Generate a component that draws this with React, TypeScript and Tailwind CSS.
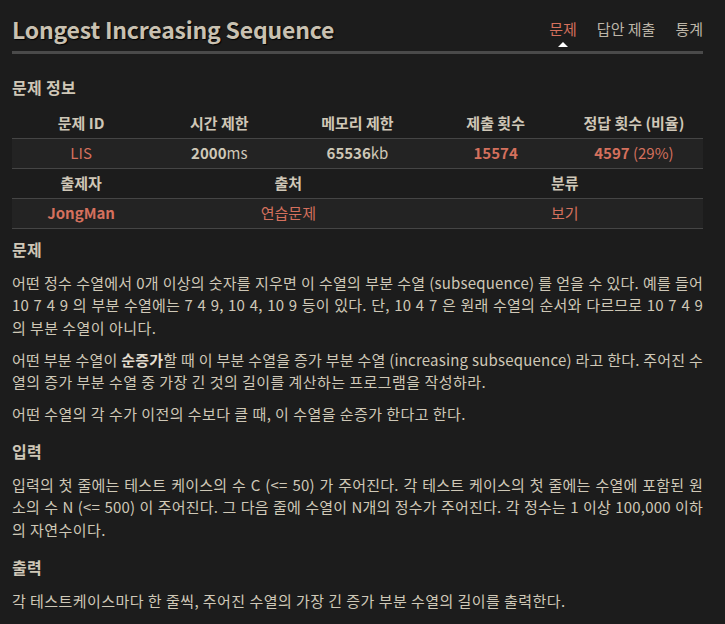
import React from "react";

const red = "text-[#d4705d]";

// 한 줄씩 끊어서 원본과 같은 줄바꿈을 유지
const Line = ({ full, children }: { full?: boolean; children: React.ReactNode }) => (
  <div className={"whitespace-nowrap " + (full ? "[text-align-last:justify]" : "tracking-[0.45px]")}>{children}</div>
);

const Section = ({ title, className, children }: { title: string; className?: string; children: React.ReactNode }) => (
  <section className={className}>
    <h2 className="text-[16px] leading-[22px] font-bold tracking-[0.3px] text-[#cfc7b7]">{title}</h2>
    <div className="mt-3 space-y-[9.5px] text-[15px] leading-[22.5px] tracking-[0.2px]">{children}</div>
  </section>
);

const App: React.FC = () => {
  return (
    <div className="min-h-screen bg-[#1c1c1c] text-[#cfc8b7] font-['Noto_Sans_CJK_KR','Noto_Sans',sans-serif]">
      <div className="ml-3 w-[691px]">
        {/* Header */}
        <header className="flex justify-between items-start pt-[14px] h-[51px]">
          <h1 className="text-[23px] leading-[30px] font-bold tracking-[-0.2px] text-[#c9c1b1] [text-shadow:1px_1px_1px_#000]">
            Longest Increasing Sequence
          </h1>
          <nav className="flex gap-[20px] text-[15px] leading-[30px]">
            <span className={"relative -ml-1 " + red}>
              문제
              <span className="absolute left-1/2 -translate-x-1/2 top-[28px] w-0 h-0 border-l-[5px] border-r-[5px] border-b-[5px] border-l-transparent border-r-transparent border-b-white" />
            </span>
            <span className="text-[#bdb6a8]">답안 제출</span>
            <span className="text-[#bdb6a8]">통계</span>
          </nav>
        </header>
        <div className="h-[3px] bg-[#4a4a4a]" />

        {/* 문제 정보 */}
        <h2 className="mt-[22px] text-[16px] leading-[22px] font-bold tracking-[0.3px] text-[#cfc7b7]">문제 정보</h2>
        <table className="mt-[10px] w-full table-fixed border-collapse text-[15px] text-center">
          <tbody>
            <tr className="h-[30px] font-bold text-[#cfc7b7]">
              <td>문제 ID</td>
              <td>시간 제한</td>
              <td>메모리 제한</td>
              <td>제출 횟수</td>
              <td>정답 횟수 (비율)</td>
            </tr>
            <tr className="h-[30px] bg-[#232323] border-t border-b border-[#454545]">
              <td className={red}>LIS</td>
              <td><b>2000</b>ms</td>
              <td><b>65536</b>kb</td>
              <td className={"font-bold " + red}>15574</td>
              <td className={red}><b>4597</b> (29%)</td>
            </tr>
            <tr className="h-[30px] font-bold text-[#cfc7b7]">
              <td>출제자</td>
              <td colSpan={2}>출처</td>
              <td colSpan={2}>분류</td>
            </tr>
            <tr className="h-[30px] bg-[#232323] border-t border-b border-[#454545]">
              <td className={"font-bold " + red}>JongMan</td>
              <td colSpan={2} className={red}>연습문제</td>
              <td colSpan={2} className={red}>보기</td>
            </tr>
          </tbody>
        </table>

        <Section title="문제" className="mt-[9px]">
          <div>
            <Line full>어떤 정수 수열에서 0개 이상의 숫자를 지우면 이 수열의 부분 수열 (subsequence) 를 얻을 수 있다. 예를 들어</Line>
            <Line full>10 7 4 9 의 부분 수열에는 7 4 9, 10 4, 10 9 등이 있다. 단, 10 4 7 은 원래 수열의 순서와 다르므로 10 7 4 9</Line>
            <Line>의 부분 수열이 아니다.</Line>
          </div>
          <div>
            <Line full>
              어떤 부분 수열이 <b className="text-[#e2dccf]">순증가</b>할 때 이 부분 수열을 증가 부분 수열 (increasing subsequence) 라고 한다. 주어진 수
            </Line>
            <Line>열의 증가 부분 수열 중 가장 긴 것의 길이를 계산하는 프로그램을 작성하라.</Line>
          </div>
          <div>
            <Line>어떤 수열의 각 수가 이전의 수보다 클 때, 이 수열을 순증가 한다고 한다.</Line>
          </div>
        </Section>

        <Section title="입력" className="mt-[14px]">
          <div>
            <Line full>입력의 첫 줄에는 테스트 케이스의 수 C (&lt;= 50) 가 주어진다. 각 테스트 케이스의 첫 줄에는 수열에 포함된 원</Line>
            <Line full>소의 수 N (&lt;= 500) 이 주어진다. 그 다음 줄에 수열이 N개의 정수가 주어진다. 각 정수는 1 이상 100,000 이하</Line>
            <Line>의 자연수이다.</Line>
          </div>
        </Section>

        <Section title="출력" className="mt-[15px]">
          <div>
            <Line>각 테스트케이스마다 한 줄씩, 주어진 수열의 가장 긴 증가 부분 수열의 길이를 출력한다.</Line>
          </div>
        </Section>
      </div>
    </div>
  );
};

export default App;
